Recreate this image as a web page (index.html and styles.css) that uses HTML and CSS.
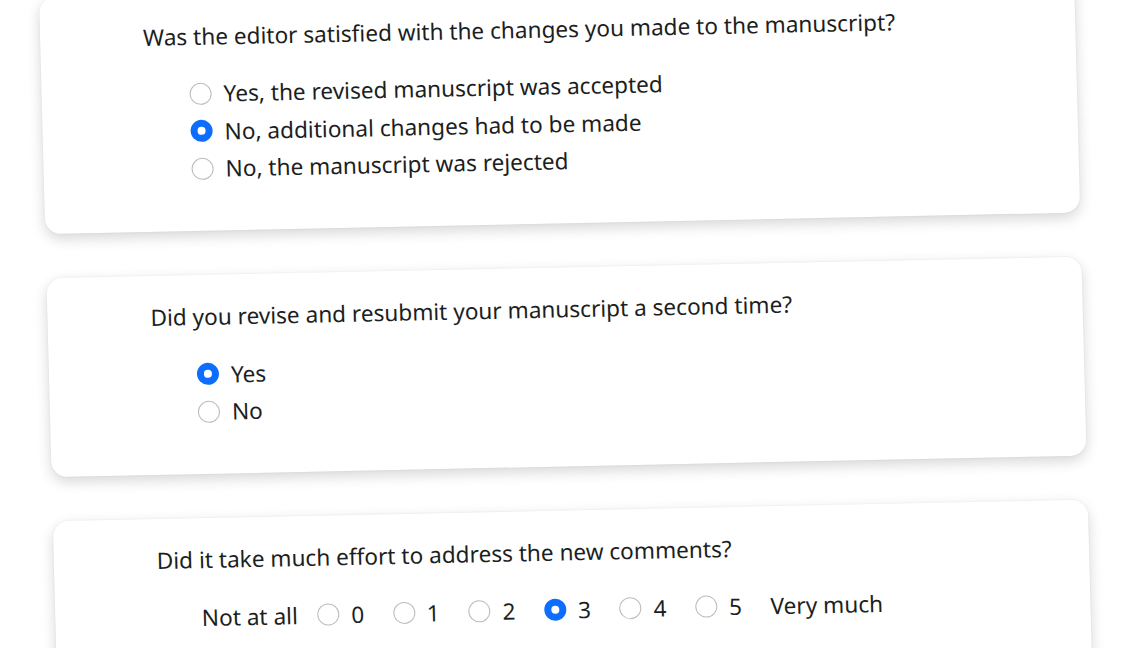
FILE: index.html
```html
<!DOCTYPE html>
<html lang="en">
<head>
<meta charset="utf-8">
<title>Survey</title>
<link rel="stylesheet" href="styles.css">
</head>
<body>
<div class="stage">
  <section class="card">
    <p class="q">Was the editor satisfied with the changes you made to the manuscript?</p>
    <div class="opts">
      <label class="opt"><input type="radio" name="q1"><span>Yes, the revised manuscript was accepted</span></label>
      <label class="opt"><input type="radio" name="q1" checked><span>No, additional changes had to be made</span></label>
      <label class="opt"><input type="radio" name="q1"><span>No, the manuscript was rejected</span></label>
    </div>
  </section>
  <section class="card">
    <p class="q">Did you revise and resubmit your manuscript a second time?</p>
    <div class="opts">
      <label class="opt"><input type="radio" name="q2" checked><span>Yes</span></label>
      <label class="opt"><input type="radio" name="q2"><span>No</span></label>
    </div>
  </section>
  <section class="card">
    <p class="q">Did it take much effort to address the new comments?</p>
    <div class="scale">
      <span class="end start">Not at all</span>
      <label class="sopt"><input type="radio" name="q3"><span>0</span></label>
      <label class="sopt"><input type="radio" name="q3"><span>1</span></label>
      <label class="sopt"><input type="radio" name="q3"><span>2</span></label>
      <label class="sopt"><input type="radio" name="q3" checked><span>3</span></label>
      <label class="sopt"><input type="radio" name="q3"><span>4</span></label>
      <label class="sopt"><input type="radio" name="q3"><span>5</span></label>
      <span class="end">Very much</span>
    </div>
  </section>
</div>
</body>
</html>
```
FILE: styles.css
```css
html, body {
  margin: 0;
  padding: 0;
  background: #ffffff;
  overflow: hidden;
}

body {
  font-family: "Noto Sans", "Open Sans", sans-serif;
  color: #1c1e21;
  width: 1134px;
  height: 648px;
}

.stage {
  transform: matrix(1, -0.0209, 0.0262, 1, 0, 0);
  transform-origin: 0 0;
  padding-left: 39px;
}

.card {
  width: 1035px;
  box-sizing: border-box;
  background: #ffffff;
  border-radius: 16px;
  box-shadow: 0 5px 14px rgba(0, 0, 0, 0.16), 0 0 2px rgba(0, 0, 0, 0.08);
  padding: 25.5px 0 43px 103px;
  margin-bottom: 44px;
}

.card:first-child {
  margin-top: -2.3px;
}

.q {
  margin: 0;
  font-size: 22.6px;
  line-height: 33px;
}

.opts {
  margin: 22.5px 0 0 45px;
  display: flex;
  flex-direction: column;
}

.opt {
  display: flex;
  align-items: center;
  gap: 12px;
  height: 37.5px;
  font-size: 22.6px;
}

input[type="radio"] {
  appearance: none;
  -webkit-appearance: none;
  box-sizing: border-box;
  width: 22px;
  height: 22px;
  margin: 0;
  border: 1px solid #bcbcbc;
  border-radius: 50%;
  background: #ffffff;
  flex: none;
}

input[type="radio"]:checked {
  border: 7px solid #0d6efd;
}

.scale {
  margin: 22.5px 0 0 43.5px;
  display: flex;
  align-items: center;
  gap: 28.6px;
  height: 37.5px;
  font-size: 22.6px;
}

.scale .start {
  margin-right: -9px;
}

.sopt {
  display: flex;
  align-items: center;
  gap: 12px;
}
```
